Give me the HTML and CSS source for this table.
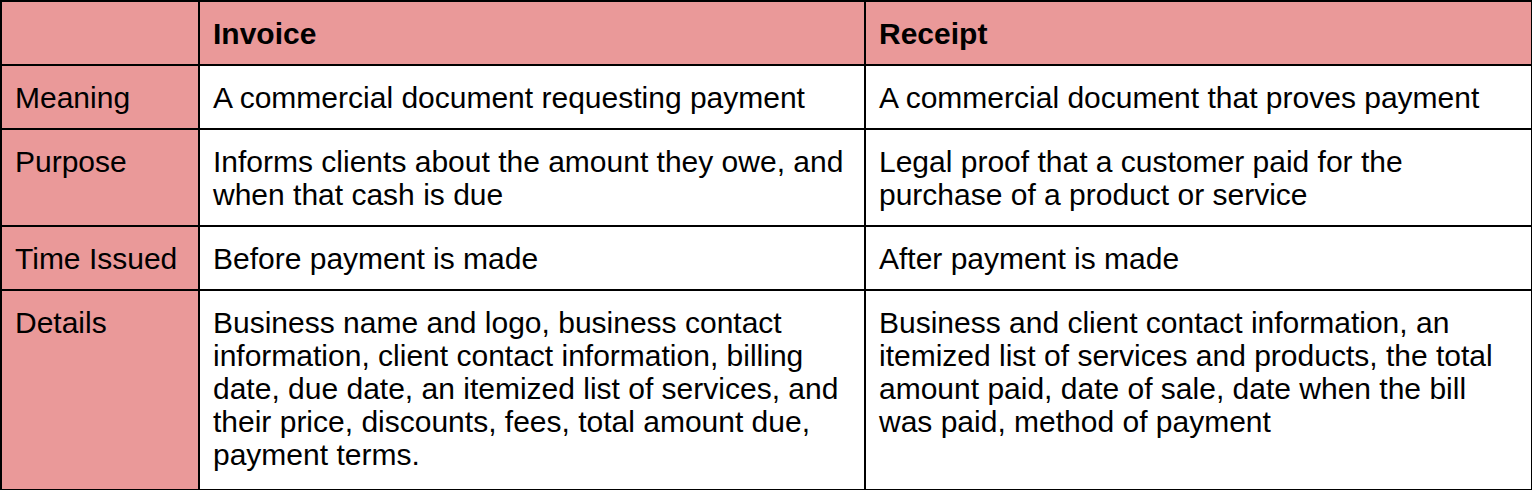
FILE: index.html
```html
<!DOCTYPE html>
<html>
<head>
<meta charset="utf-8">
<link rel="stylesheet" href="styles.css">
</head>
<body>
<table class="cmp">
  <colgroup>
    <col class="c1"><col class="c2"><col class="c3">
  </colgroup>
  <tr class="head">
    <th class="label"></th>
    <th>Invoice</th>
    <th>Receipt</th>
  </tr>
  <tr>
    <td class="label">Meaning</td>
    <td>A commercial document requesting payment</td>
    <td>A commercial document that proves payment</td>
  </tr>
  <tr>
    <td class="label">Purpose</td>
    <td>Informs clients about the amount they owe, and when that cash is due</td>
    <td>Legal proof that a customer paid for the purchase of a product or service</td>
  </tr>
  <tr>
    <td class="label">Time Issued</td>
    <td>Before payment is made</td>
    <td>After payment is made</td>
  </tr>
  <tr class="details">
    <td class="label">Details</td>
    <td>Business name and logo, business contact information, client contact information, billing date, due date, an itemized list of services, and their price, discounts, fees, total amount due, payment terms.</td>
    <td>Business and client contact information, an itemized list of services and products, the total amount paid, date of sale, date when the bill was paid, method of payment</td>
  </tr>
</table>
</body>
</html>
```
FILE: styles.css
```css
html, body {
  margin: 0;
  padding: 0;
  background: #ffffff;
}
.cmp {
  border-collapse: collapse;
  width: 1531px;
  margin: 0;
  table-layout: fixed;
  font-family: "Liberation Sans", Arial, sans-serif;
  font-size: 30px;
  line-height: 33px;
  color: #000;
}
.c1 { width: 198px; }
.c2 { width: 666px; }
.c3 { width: 667px; }
.cmp th, .cmp td {
  border: 2px solid #000;
  padding: 15px 12px 14px 13px;
  text-align: left;
  vertical-align: top;
}
.cmp th {
  font-weight: bold;
  background: #ea9999;
}
.cmp td.label {
  background: #ea9999;
}
.details td {
  padding-bottom: 18px;
}
```
